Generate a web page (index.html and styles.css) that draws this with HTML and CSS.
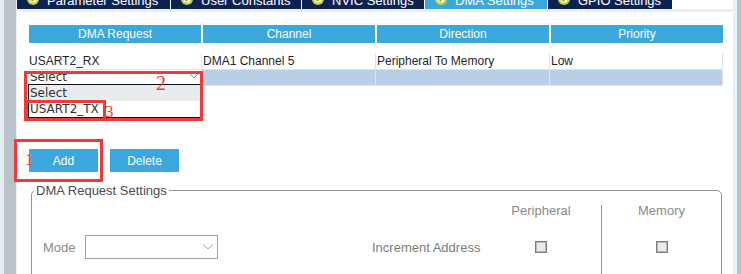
FILE: index.html
```html
<!DOCTYPE html>
<html lang="en">
<head>
    <meta charset="UTF-8">
    <meta name="viewport" content="width=device-width, initial-scale=1.0">
    <title>DMA Settings</title>
    <link rel="stylesheet" href="styles.css">
</head>
<body>
    <div class="screen">
        <div class="rail"></div>
        <div class="main">
            <nav class="tabs">
                <div class="tab tab-param">
                    <svg class="tab-icon" viewBox="0 0 12 12"><circle cx="6" cy="6" r="6" fill="#c3d13c"/><circle cx="6" cy="6" r="3.6" fill="#fff"/><path d="M3.8 6.2 L5.4 7.8 L8.4 4.6" fill="none" stroke="#a2b52a" stroke-width="1.6"/></svg>
                    <span class="tab-label">Parameter Settings</span>
                </div>
                <div class="tab tab-user">
                    <svg class="tab-icon" viewBox="0 0 12 12"><circle cx="6" cy="6" r="6" fill="#c3d13c"/><circle cx="6" cy="6" r="3.6" fill="#fff"/><path d="M3.8 6.2 L5.4 7.8 L8.4 4.6" fill="none" stroke="#a2b52a" stroke-width="1.6"/></svg>
                    <span class="tab-label">User Constants</span>
                </div>
                <div class="tab tab-nvic">
                    <svg class="tab-icon" viewBox="0 0 12 12"><circle cx="6" cy="6" r="6" fill="#c3d13c"/><circle cx="6" cy="6" r="3.6" fill="#fff"/><path d="M3.8 6.2 L5.4 7.8 L8.4 4.6" fill="none" stroke="#a2b52a" stroke-width="1.6"/></svg>
                    <span class="tab-label">NVIC Settings</span>
                </div>
                <div class="tab tab-dma tab-active">
                    <svg class="tab-icon" viewBox="0 0 12 12"><circle cx="6" cy="6" r="6" fill="#c3d13c"/><circle cx="6" cy="6" r="3.6" fill="#fff"/><path d="M3.8 6.2 L5.4 7.8 L8.4 4.6" fill="none" stroke="#a2b52a" stroke-width="1.6"/></svg>
                    <span class="tab-label">DMA Settings</span>
                </div>
                <div class="tab tab-gpio">
                    <svg class="tab-icon" viewBox="0 0 12 12"><circle cx="6" cy="6" r="6" fill="#c3d13c"/><circle cx="6" cy="6" r="3.6" fill="#fff"/><path d="M3.8 6.2 L5.4 7.8 L8.4 4.6" fill="none" stroke="#a2b52a" stroke-width="1.6"/></svg>
                    <span class="tab-label">GPIO Settings</span>
                </div>
            </nav>

            <section class="panel">
                <div class="dma-table">
                    <div class="thead">
                        <div class="th">DMA Request</div>
                        <div class="th">Channel</div>
                        <div class="th">Direction</div>
                        <div class="th">Priority</div>
                    </div>
                    <div class="tbody">
                        <div class="trow">
                            <div class="td">USART2_RX</div>
                            <div class="td">DMA1 Channel 5</div>
                            <div class="td">Peripheral To Memory</div>
                            <div class="td">Low</div>
                        </div>
                        <div class="trow trow-new">
                            <div class="td">
                                <div class="select">
                                    <span>Select</span>
                                    <svg class="chevron" width="10" height="6" viewBox="0 0 10 6"><path d="M0.5 0.5 L5 5 L9.5 0.5" fill="none" stroke="#8c8c8c" stroke-width="1"/></svg>
                                    <ul class="options">
                                        <li class="option option-hover">Select</li>
                                        <li class="option">USART2_TX</li>
                                    </ul>
                                </div>
                            </div>
                            <div class="td"></div>
                            <div class="td"></div>
                            <div class="td"></div>
                        </div>
                    </div>
                </div>

                <div class="actions">
                    <button type="button" class="btn">Add</button>
                    <button type="button" class="btn">Delete</button>
                </div>

                <fieldset class="settings">
                    <legend>DMA Request Settings</legend>
                    <div class="settings-grid">
                        <div class="col-head col-periph">Peripheral</div>
                        <div class="divider"></div>
                        <div class="col-head col-mem">Memory</div>

                        <div class="label label-mode">Mode</div>
                        <div class="mode-select">
                            <svg width="10" height="6" viewBox="0 0 10 6"><path d="M0.5 0.5 L5 5 L9.5 0.5" fill="none" stroke="#a5a5a5" stroke-width="1"/></svg>
                        </div>
                        <div class="label label-inc">Increment Address</div>
                        <div class="check-cell col-periph"><span class="checkbox"></span></div>
                        <div class="check-cell col-mem"><span class="checkbox"></span></div>
                    </div>
                </fieldset>
            </section>
        </div>
        <div class="rail rail-right"></div>

        <div class="mark mark-1"></div>
        <div class="mark mark-2"></div>
        <div class="mark mark-3"></div>
        <span class="mark-num num-1">1</span>
        <span class="mark-num num-2">2</span>
        <span class="mark-num num-3">3</span>
    </div>
</body>
</html>
```

FILE: styles.css
```css
html, body {
    margin: 0;
    padding: 0;
    overflow: hidden;
}
body {
    font-family: "Liberation Sans", Arial, sans-serif;
    background-color: #e8eef2;
    color: #222;
}
.screen {
    position: relative;
    display: flex;
    height: 274px;
    overflow: hidden;
}
.rail {
    flex: none;
    width: 12px;
    margin-left: 4px;
    background-color: #b9c4ca;
}
.rail-right {
    width: 4px;
    margin-left: 4px;
}
.main {
    flex: none;
    width: 716px;
    margin-left: 1px;
    display: flex;
    flex-direction: column;
}

/* tabs, only their lower edge is in view */
.tabs {
    flex: none;
    display: flex;
    gap: 1px;
    height: 9px;
    background-color: #fff;
    overflow: hidden;
}
.tab {
    flex: none;
    display: flex;
    align-items: flex-start;
    gap: 8px;
    padding-left: 10px;
    box-sizing: border-box;
    background-color: #0c2252;
    color: #fff;
    font-size: 13px;
}
.tab-active {
    background-color: #3aa8dc;
}
.tab-param { width: 153px; }
.tab-user { width: 130px; }
.tab-nvic { width: 122px; }
.tab-dma { width: 122px; }
.tab-gpio { width: 124px; }
.tab-icon {
    flex: none;
    width: 12px;
    height: 12px;
    margin-top: -7px;
}
.tab-label {
    margin-top: -7px;
    line-height: 16px;
    white-space: nowrap;
}

.panel {
    flex: none;
    margin-top: 3px;
    padding: 13px 10px 0 12px;
    background-color: #fff;
}

/* table */
.thead {
    display: grid;
    grid-template-columns: repeat(4, 172px);
    gap: 2px;
}
.th {
    height: 18px;
    line-height: 18px;
    background-color: #3aa8dc;
    color: #fff;
    font-size: 12px;
    text-align: center;
}
.tbody {
    margin-top: 10px;
}
.trow {
    display: grid;
    grid-template-columns: 173px 174px 174px 173px;
    border-bottom: 1px solid #dde3e8;
}
.td {
    height: 16px;
    line-height: 16px;
    padding-left: 1px;
    border-right: 1px solid #dde3e8;
    font-size: 12px;
    color: #1f1f2e;
    white-space: nowrap;
}
.td:first-child {
    padding-left: 0;
}
.trow-new {
    background-color: #b9cfe5;
}
.trow-new .td {
    height: 15px;
}
.select {
    position: relative;
    display: flex;
    justify-content: space-between;
    align-items: center;
    height: 14px;
    padding: 0 2px 0 1px;
    background-color: #fff;
    font-family: "DejaVu Sans", sans-serif;
    font-size: 12px;
    line-height: 14px;
    color: #333;
}
.chevron {
    margin-top: -3px;
}
.options {
    position: absolute;
    top: 14px;
    left: -1px;
    width: 174px;
    box-sizing: border-box;
    margin: 0;
    padding: 0;
    list-style: none;
    border: 1px solid #111;
    background-color: #fff;
    z-index: 2;
}
.option {
    height: 16px;
    line-height: 16px;
    padding-left: 1px;
}
.option-hover {
    background-color: #e8ecef;
}

/* buttons */
.actions {
    display: flex;
    gap: 12px;
    margin-top: 63px;
}
.btn {
    width: 69px;
    height: 23px;
    padding: 0;
    border: none;
    border-radius: 0;
    background-color: #3aa8dc;
    color: #fff;
    font-family: "Liberation Sans", Arial, sans-serif;
    font-size: 12px;
}

/* settings group */
.settings {
    margin: 11px 1px 0 2px;
    padding: 0 0 40px 0;
    border: 1px solid #8e969c;
    border-radius: 5px;
    min-width: 0;
}
.settings legend {
    margin-left: 2px;
    padding: 0 2px;
    font-size: 13px;
    line-height: 15px;
    color: #4d4d4d;
}
.settings-grid {
    display: grid;
    grid-template-columns: 42px 133px 1fr 109px 120px 1px 119px;
    grid-template-rows: 16px 24px 30px;
    row-gap: 16px;
    align-items: center;
    margin: 5px 0 0 11px;
    font-size: 13px;
    color: #8a8a8a;
}
.col-head {
    grid-row: 1;
    line-height: 16px;
    text-align: center;
}
.col-periph { grid-column: 5; }
.col-mem { grid-column: 7; }
.divider {
    grid-column: 6;
    grid-row: 1 / -1;
    align-self: stretch;
    margin-top: 2px;
    background-color: #8a93c8;
}
.label {
    grid-row: 2;
    white-space: nowrap;
}
.label-mode { grid-column: 1; }
.label-inc {
    grid-column: 4;
    color: #7c7c7c;
}
.mode-select {
    grid-column: 2;
    grid-row: 2;
    height: 24px;
    box-sizing: border-box;
    display: flex;
    justify-content: flex-end;
    align-items: center;
    padding-right: 4px;
    border: 1px solid #a3a3a3;
    background-color: #fff;
}
.check-cell {
    grid-row: 2;
    display: flex;
    justify-content: center;
}
.checkbox {
    width: 12px;
    height: 12px;
    box-sizing: border-box;
    border: 1px solid #7d7d7d;
    box-shadow: inset 0 0 0 1px #b8b8b8;
    background-color: #e9ecef;
}

/* red annotation marks on top of the capture */
.mark {
    position: absolute;
    box-sizing: border-box;
    border: 3px solid #f03a3a;
    z-index: 5;
}
.mark-1 { left: 14px; top: 139px; width: 89px; height: 43px; }
.mark-2 { left: 24px; top: 71px; width: 179px; height: 50px; }
.mark-3 { left: 25px; top: 100px; width: 81px; height: 21px; }
.mark-num {
    position: absolute;
    z-index: 6;
    font-family: "Liberation Serif", "Times New Roman", serif;
    line-height: 1;
    color: #f03a3a;
}
.num-1 { left: 25px; top: 151px; font-size: 17px; }
.num-2 { left: 156px; top: 73px; font-size: 20px; }
.num-3 { left: 105px; top: 103px; font-size: 17px; }
```
